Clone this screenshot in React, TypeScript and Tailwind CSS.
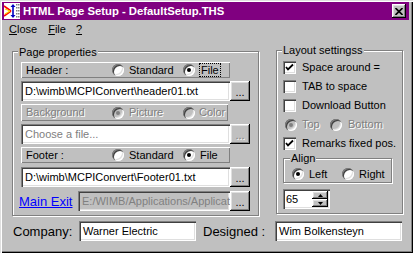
import React from 'react';

// Win9x "HTML Page Setup" dialog

const sunken =
  'shadow-[inset_1px_1px_0_#808080,inset_2px_2px_0_#404040,inset_-1px_-1px_0_#fff,inset_-2px_-2px_0_#dfdfdf]';
const raised =
  'shadow-[inset_-1px_-1px_0_#000,inset_1px_1px_0_#fff,inset_-2px_-2px_0_#808080,inset_2px_2px_0_#dfdfdf]';
const panel = 'shadow-[inset_1px_1px_0_#fff,inset_-1px_-1px_0_#808080]';
const etched = 'border border-[#808080] shadow-[inset_1px_1px_0_#fff,1px_1px_0_#fff]';
const dimText = 'text-[#808080] [text-shadow:1px_1px_0_#fff]';

const Radio = ({ checked, disabled }: { checked?: boolean; disabled?: boolean }) => (
  <span
    className={`w-[12px] h-[12px] shrink-0 rounded-full flex items-center justify-center ${sunken} ${
      disabled ? 'bg-[#c0c0c0]' : 'bg-white'
    }`}
  >
    {checked && (
      <span className={`w-[4px] h-[4px] rounded-full ${disabled ? 'bg-[#808080]' : 'bg-black'}`} />
    )}
  </span>
);

const Check = ({ checked }: { checked?: boolean }) => (
  <span className={`w-[13px] h-[13px] shrink-0 bg-white flex items-center justify-center ${sunken}`}>
    {checked && (
      <svg width="9" height="9" viewBox="0 0 9 9">
        <path d="M1 4 L3 6.5 L8 1.5" fill="none" stroke="#000" strokeWidth="1.8" />
      </svg>
    )}
  </span>
);

const DotsButton = ({ disabled }: { disabled?: boolean }) => (
  <div className={`w-[20px] h-[20px] shrink-0 bg-[#c0c0c0] flex items-center justify-center pt-[3px] ${raised}`}>
    <span className={disabled ? dimText : ''}>...</span>
  </div>
);

const Field = ({
  w,
  text,
  muted,
  gray,
}: {
  w: string;
  text: string;
  muted?: boolean;
  gray?: boolean;
}) => (
  <div
    className={`${w} h-[20px] shrink-0 flex items-center pl-[4px] overflow-hidden whitespace-nowrap ${sunken} ${
      gray ? 'bg-[#c0c0c0]' : 'bg-white'
    } ${muted ? 'text-[#808080]' : ''}`}
  >
    {text}
  </div>
);

const SourceRow = ({
  label,
  a,
  b,
  picked,
  disabled,
  focus,
  w,
  h,
}: {
  label: string;
  a: string;
  b: string;
  picked: 'a' | 'b';
  disabled?: boolean;
  focus?: boolean;
  w: string;
  h: string;
}) => (
  <div className={`${w} ${h} flex items-center pl-[5px] ${panel}`}>
    <span className={`w-[86px] ${disabled ? dimText : ''}`}>{label}</span>
    <span className="w-[71px] flex items-center gap-[5px]">
      <Radio checked={picked === 'a'} disabled={disabled} />
      <span className={disabled ? dimText : ''}>{a}</span>
    </span>
    <span className="flex items-center gap-[4px]">
      <Radio checked={picked === 'b'} disabled={disabled} />
      {focus ? (
        <span className="border border-dotted border-black px-[1px] leading-[12px]">{b}</span>
      ) : (
        <span className={disabled ? dimText : 'pl-[1px]'}>{b}</span>
      )}
    </span>
  </div>
);

const AppIcon = () => (
  <svg width="16" height="16" viewBox="0 0 16 16">
    <rect x="0" y="0" width="16" height="16" fill="#fff" />
    <path d="M0 3 L7 8 M0 13 L7 8" stroke="#ff0000" strokeWidth="1.6" />
    <path d="M1 6 L6 8 M1 11 L6 8" stroke="#ffd800" strokeWidth="1.2" />
    <path d="M9 2 V14" stroke="#0000c0" strokeWidth="1.6" />
    <path d="M6.5 4 L9 1 L11.5 4 Z M6.5 12 L9 15 L11.5 12 Z" fill="#0000c0" />
    {[2, 5, 8, 11, 14].map((y) =>
      [12, 14].map((x) => <rect key={`${x}-${y}`} x={x} y={y - 1} width="1.5" height="1.5" fill="#808080" />)
    )}
  </svg>
);

export default function App() {
  return (
    <div className="w-[413px] h-[253px] overflow-hidden bg-[#c0c0c0] pt-[2px] pl-[2px] pr-[4px] pb-[2px] flex flex-col font-['Liberation_Sans',Arial,sans-serif] text-[11px] leading-[13px] text-black shadow-[inset_1px_1px_0_#dfdfdf,inset_2px_2px_0_#fff,inset_-1px_-1px_0_#000,inset_-2px_-2px_0_#808080]">
      {/* title bar */}
      <div className="h-[18px] shrink-0 bg-[#800080] flex items-center pl-[2px] pr-[3px]">
        <AppIcon />
        <span className="ml-[3px] text-white font-bold text-[11.3px]">HTML Page Setup - DefaultSetup.THS</span>
        <div className={`ml-auto w-[14px] h-[14px] bg-[#c0c0c0] flex items-center justify-center ${raised}`}>
          <svg width="8" height="7" viewBox="0 0 8 7">
            <path d="M0.5 0 L7.5 7 M7.5 0 L0.5 7" stroke="#000" strokeWidth="1.6" />
          </svg>
        </div>
      </div>

      {/* menu */}
      <div className="h-[18px] shrink-0 flex items-center pl-[7px] pt-[1px]">
        <span>
          <span className="underline">C</span>lose
        </span>
        <span className="ml-[11px]">
          <span className="underline">F</span>ile
        </span>
        <span className="ml-[10px] underline">?</span>
      </div>

      {/* groups */}
      <div className="flex items-start pt-[12px] pl-[10px] gap-[17px]">
        <div className={`relative mt-[1px] w-[247px] h-[165px] pt-[10px] pl-[8px] flex flex-col ${etched}`}>
          <span className="absolute left-[5px] top-[-6px] px-[1px] bg-[#c0c0c0]">Page properties</span>

          <SourceRow label="Header :" a="Standard" b="File" picked="b" focus w="w-[209px]" h="h-[16px]" />
          <div className="mt-[3px] flex">
            <Field w="w-[209px]" text={'D:\\wimb\\MCPIConvert\\header01.txt'} />
            <DotsButton />
          </div>

          <div className="mt-[3px]">
            <SourceRow label="Background" a="Picture" b="Color" picked="a" disabled w="w-[207px]" h="h-[17px]" />
          </div>
          <div className="mt-[3px] flex">
            <Field w="w-[209px]" text="Choose a file..." muted />
            <DotsButton disabled />
          </div>

          <div className="mt-[3px]">
            <SourceRow label="Footer :" a="Standard" b="File" picked="b" w="w-[209px]" h="h-[16px]" />
          </div>
          <div className="mt-[4px] flex">
            <Field w="w-[209px]" text={'D:\\wimb\\MCPIConvert\\Footer01.txt'} />
            <DotsButton />
          </div>

          <div className="mt-[4px] flex items-center">
            <span className="ml-[-2px] w-[59px] text-[13px] leading-[15px] text-[#0000ff] underline">Main Exit</span>
            <Field w="w-[152px]" text="E:/WIMB/Applications/Applications.htm" muted gray />
            <DotsButton />
          </div>
        </div>

        <div className={`relative w-[127px] h-[164px] pt-[7px] pl-[6px] flex flex-col ${etched}`}>
          <span className="absolute left-[5px] top-[-7px] px-[1px] bg-[#c0c0c0]">Layout settingss</span>

          {[
            { t: 'Space around =', c: true },
            { t: 'TAB to space', c: false },
            { t: 'Download Button', c: false },
          ].map((r) => (
            <div key={r.t} className="h-[19px] flex items-center gap-[6px]">
              <Check checked={r.c} />
              <span>{r.t}</span>
            </div>
          ))}
          <div className="h-[19px] flex items-center pl-[2px]">
            <span className="w-[45px] flex items-center gap-[5px]">
              <Radio checked disabled />
              <span className={dimText}>Top</span>
            </span>
            <span className="flex items-center gap-[6px]">
              <Radio disabled />
              <span className={dimText}>Bottom</span>
            </span>
          </div>
          <div className="h-[19px] flex items-center gap-[6px]">
            <Check checked />
            <span>Remarks fixed pos.</span>
          </div>

          <div className={`relative mt-[5px] w-[109px] h-[25px] ${etched}`}>
            <span className="absolute left-[6px] top-[-7px] px-[1px] bg-[#c0c0c0]">Align</span>
            <div className="mt-[8px] ml-[8px] h-[14px] flex items-center">
              <span className="w-[50px] flex items-center gap-[5px]">
                <Radio checked />
                <span>Left</span>
              </span>
              <span className="flex items-center gap-[5px]">
                <Radio />
                <span>Right</span>
              </span>
            </div>
          </div>

          <div className={`mt-[6px] w-[47px] h-[20px] bg-white flex ${sunken}`}>
            <span className="flex-1 pl-[3px] flex items-center">65</span>
            <div className="my-[2px] mr-[2px] w-[16px] flex flex-col">
              <div className={`h-[8px] bg-[#c0c0c0] flex items-center justify-center ${raised}`}>
                <svg width="5" height="3" viewBox="0 0 5 3">
                  <path d="M0 3 L2.5 0 L5 3 Z" fill="#000" />
                </svg>
              </div>
              <div className={`h-[8px] bg-[#c0c0c0] flex items-center justify-center ${raised}`}>
                <svg width="5" height="3" viewBox="0 0 5 3">
                  <path d="M0 0 L2.5 3 L5 0 Z" fill="#000" />
                </svg>
              </div>
            </div>
          </div>
        </div>
      </div>

      {/* company / designer */}
      <div className="mt-[5px] h-[20px] flex items-center pl-[11px]">
        <span className="w-[66px] text-[13px] leading-[15px]">Company:</span>
        <Field w="w-[117px]" text="Warner Electric" />
        <span className="w-[79px] pl-[7px] text-[13px] leading-[15px]">Designed :</span>
        <Field w="w-[127px]" text="Wim Bolkensteyn" />
      </div>
    </div>
  );
}
